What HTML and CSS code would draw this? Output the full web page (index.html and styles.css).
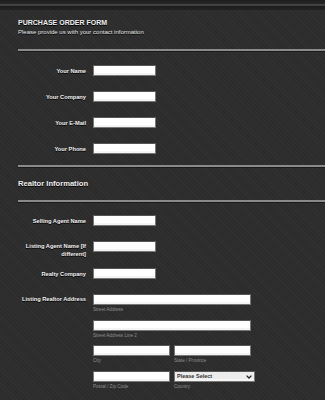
FILE: index.html
```html
<!DOCTYPE html>
<html lang="en">
  <head>
    <meta charset="UTF-8">
    <title>Purchase Order Form</title>
    <link rel="stylesheet" href="styles.css">
  </head>
  <body>

    <div id="topbar"></div>

    <div id="form">

      <div id="header">
        <h1>PURCHASE ORDER FORM</h1>
        <div class="subtitle">Please provide us with your contact information</div>
      </div>

      <div class="rule"></div>

      <div class="section contact">
        <div class="row">
          <label>Your Name</label>
          <input type="text" class="short">
        </div>
        <div class="row">
          <label>Your Company</label>
          <input type="text" class="short">
        </div>
        <div class="row">
          <label>Your E-Mail</label>
          <input type="text" class="short">
        </div>
        <div class="row last">
          <label>Your Phone</label>
          <input type="text" class="short">
        </div>
      </div>

      <div class="rule"></div>
      <h2>Realtor Information</h2>
      <div class="rule"></div>

      <div class="section realtor">
        <div class="row">
          <label>Selling Agent Name</label>
          <input type="text" class="short">
        </div>
        <div class="row top tall">
          <label>Listing Agent Name [If different]</label>
          <input type="text" class="short">
        </div>
        <div class="row">
          <label>Realty Company</label>
          <input type="text" class="short">
        </div>
        <div class="row top">
          <label>Listing Realtor Address</label>
          <div class="address">
            <div class="sub full">
              <input type="text">
              <span>Street Address</span>
            </div>
            <div class="sub full">
              <input type="text">
              <span>Street Address Line 2</span>
            </div>
            <div class="sub">
              <input type="text">
              <span>City</span>
            </div>
            <div class="sub">
              <input type="text">
              <span>State / Province</span>
            </div>
            <div class="sub">
              <input type="text">
              <span>Postal / Zip Code</span>
            </div>
            <div class="sub country">
              <div class="select">
                <select>
                  <option>Please Select</option>
                  <option>United States</option>
                  <option>Canada</option>
                </select>
                <svg class="chevron" width="6" height="4" viewBox="0 0 6 4">
                  <path d="M0.6 0.6 L3 3 L5.4 0.6" fill="none" stroke="#222" stroke-width="1.3"/>
                </svg>
              </div>
              <span>Country</span>
            </div>
          </div>
        </div>
      </div>

    </div>

  </body>
</html>
```

FILE: styles.css
```css
html, body {
  margin: 0;
  padding: 0;
}
body {
  width: 325px;
  height: 400px;
  overflow: hidden;
  font-family: 'Liberation Sans', Arial, sans-serif;
  color: #eee;
  background-color: #2c2c2c;
  background-image: repeating-linear-gradient(45deg, rgba(255, 255, 255, 0.025) 0, rgba(255, 255, 255, 0.025) 1px, transparent 1px, transparent 3px);
}
*, *:before, *:after {
  box-sizing: border-box;
}
#topbar {
  height: 10px;
  background: linear-gradient(#1f1f1f 0, #262626 4px, #4a4a4a 4px, #3a3a3a 6px, #1c1c1c 6px, #232323 10px);
}
#form {
  padding-left: 18px;
}
#header {
  padding-top: 8px;
  padding-bottom: 12px;
}
h1 {
  margin: 0;
  font-size: 7px;
  line-height: 10px;
  font-weight: bold;
  color: #f0f0f0;
  text-shadow: 0 1px 0 #000;
}
.subtitle {
  font-size: 6px;
  line-height: 9px;
  color: #e6e6e6;
  text-shadow: 0 1px 0 #000;
}
h2 {
  margin: 0;
  padding: 10px 0 11px;
  font-size: 7.6px;
  line-height: 11px;
  font-weight: bold;
  color: #f0f0f0;
  text-shadow: 0 1px 0 #000;
}
.rule {
  height: 3px;
  border-top: 2px solid #8a8a8a;
  border-bottom: 1px solid #1a1a1a;
}
.section {
  padding: 13px 0 11px;
}
.section.realtor {
  padding-top: 12px;
}
.row {
  display: grid;
  grid-template-columns: 68px auto;
  column-gap: 7px;
  align-items: center;
  margin-bottom: 15px;
}
.row.last {
  margin-bottom: 0;
}
.row.top {
  align-items: start;
}
.row.tall {
  margin-bottom: 10px;
}
label {
  text-align: right;
  font-size: 5.7px;
  line-height: 8px;
  font-weight: bold;
  color: #f2f2f2;
  text-shadow: 0 1px 0 #000;
}
.row.top label {
  padding-top: 1px;
}
input, select {
  display: block;
  height: 11px;
  margin: 0;
  padding: 0 2px;
  border: 1px solid #777;
  border-top-color: #555;
  background-color: #fff;
  border-radius: 0;
  outline: none;
  box-shadow: inset 0 -2px 0 #f4f4f4;
}
input.short {
  width: 63px;
}
.address {
  display: grid;
  grid-template-columns: 77px 81px;
  column-gap: 4px;
  width: 162px;
}
.sub {
  display: flex;
  flex-direction: column;
}
.sub.full {
  grid-column: 1 / 3;
}
.sub.full input {
  width: 158px;
}
.sub input {
  width: 77px;
}
.sub span {
  height: 14.5px;
  padding-top: 2px;
  font-size: 4.6px;
  line-height: 5px;
  color: #8f8f8f;
}
.select {
  position: relative;
  width: 81px;
}
select {
  width: 81px;
  padding: 0 2px;
  font-family: 'Liberation Sans', Arial, sans-serif;
  font-size: 5.5px;
  font-weight: bold;
  color: #333;
  background-color: #ececec;
  -webkit-appearance: none;
  appearance: none;
}
.chevron {
  position: absolute;
  right: 3px;
  top: 4px;
}
```
